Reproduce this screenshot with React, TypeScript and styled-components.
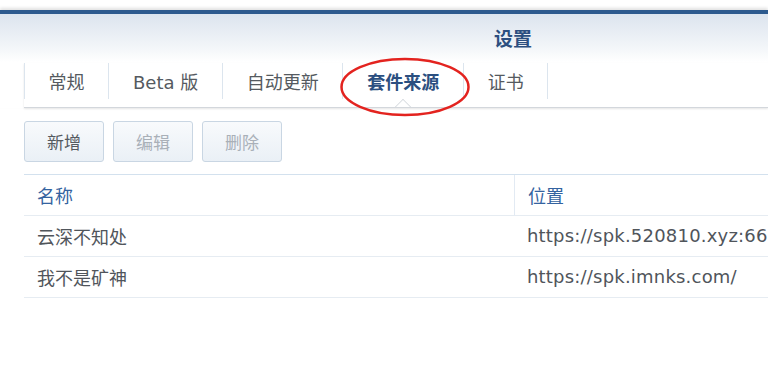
import React from 'react'
import styled, { createGlobalStyle, css } from 'styled-components'

const GlobalStyle = createGlobalStyle`
  html, body {
    margin: 0;
    padding: 0;
    background: #fff;
    overflow: hidden;
  }
  body {
    font-family: "DejaVu Sans", "Noto Sans CJK SC", sans-serif;
  }
`

const Page = styled.div`
  position: relative;
  width: 768px;
  height: 384px;
  overflow: hidden;
  padding-top: 10px;
  box-sizing: border-box;
  background: #fff;
`

const Header = styled.div`
  border-top: 4px solid #2d5a8e;
  box-shadow: 0 -2px 3px rgba(0, 0, 0, 0.12);
  background: linear-gradient(to bottom, #dce4ee 0px, #f3f6f9 34px, #ffffff 48px);
`

const Title = styled.div`
  height: 49px;
  line-height: 47px;
  padding-left: 494px;
  font-family: "Noto Sans CJK SC", sans-serif;
  font-size: 19px;
  font-weight: 700;
  color: #2c4f80;
`

const TabStrip = styled.div`
  display: flex;
  margin-left: 24px;
  padding-bottom: 8px;
  border-bottom: 1px solid #d3d7dc;
  box-shadow: 0 1px 2px rgba(0, 0, 0, 0.1);
`

const Tab = styled.div<{ active?: boolean; first?: boolean }>`
  position: relative;
  height: 33px;
  line-height: 33px;
  padding: 3px 23.75px 0 ${({ first }) => (first ? '23.5px' : '23.75px')};
  border-right: 1px solid #dce5ee;
  border-left: ${({ first }) => (first ? '1px solid #dce5ee' : 'none')};
  font-size: 18px;
  color: #555a60;
  white-space: nowrap;
  ${({ active }) =>
    active &&
    css`
      font-weight: 700;
      color: #2b4f80;
      &::after {
        content: '';
        position: absolute;
        left: 50%;
        bottom: -14px;
        width: 11px;
        height: 11px;
        margin-left: -6px;
        background: #fff;
        border-left: 1px solid #d3d7dc;
        border-top: 1px solid #d3d7dc;
        transform: rotate(45deg);
        clip-path: polygon(0 0, 100% 0, 0 100%);
      }
    `}
`

const Toolbar = styled.div`
  display: flex;
  gap: 9px;
  margin: 13px 0 0 24px;
`

const Button = styled.button<{ disabled?: boolean }>`
  width: 80px;
  height: 41px;
  padding: 0;
  border: 1px solid #c9d6e3;
  border-radius: 3px;
  background: linear-gradient(to bottom, #f8fafc, #eaf0f6);
  font-family: "Noto Sans CJK SC", sans-serif;
  font-size: 17px;
  color: ${({ disabled }) => (disabled ? '#a9b0b8' : '#555a60')};
`

const Grid = styled.div`
  display: grid;
  grid-template-columns: 490px 1fr;
  margin: 12px 0 0 24px;
  border-top: 1px solid #d3e1ee;
`

const HeadCell = styled.div<{ divider?: boolean }>`
  height: 40px;
  line-height: 40px;
  padding-left: 13px;
  border-bottom: 1px solid #e6ecf2;
  border-left: ${({ divider }) => (divider ? '1px solid #e2eaf3' : 'none')};
  font-family: "Noto Sans CJK SC", sans-serif;
  font-size: 18px;
  color: #3463a0;
`

const Cell = styled.div`
  height: 40px;
  line-height: 40px;
  padding-left: 13px;
  border-bottom: 1px solid #e6ecf2;
  font-size: 18px;
  letter-spacing: 0.2px;
  color: #50555b;
  white-space: nowrap;
  overflow: hidden;
`

const NameCell = styled(Cell)`
  letter-spacing: 0;
  font-family: "Noto Sans CJK SC", sans-serif;
`

const UrlCell = styled(Cell)`
  padding-left: 13px;
`

const Highlight = styled.svg`
  position: absolute;
  left: 338px;
  top: 56px;
  pointer-events: none;
`

const tabs = ['常规', 'Beta 版', '自动更新', '套件来源', '证书']

const sources = [
  { name: '云深不知处', url: 'https://spk.520810.xyz:666/' },
  { name: '我不是矿神', url: 'https://spk.imnks.com/' }
]

export default function App() {
  return (
    <>
      <GlobalStyle />
      <Page>
        <Header>
          <Title>设置</Title>
          <TabStrip>
            {tabs.map((t, i) => (
              <Tab key={t} first={i === 0} active={t === '套件来源'}>
                {t}
              </Tab>
            ))}
          </TabStrip>
        </Header>
        <Toolbar>
          <Button>新增</Button>
          <Button disabled>编辑</Button>
          <Button disabled>删除</Button>
        </Toolbar>
        <Grid>
          <HeadCell>名称</HeadCell>
          <HeadCell divider>位置</HeadCell>
          {sources.map((s) => (
            <React.Fragment key={s.name}>
              <NameCell>{s.name}</NameCell>
              <UrlCell>{s.url}</UrlCell>
            </React.Fragment>
          ))}
        </Grid>
        <Highlight width="134" height="62" viewBox="0 0 134 62">
          <ellipse cx="67" cy="31" rx="63.5" ry="28" fill="none" stroke="#e3231f" strokeWidth="2.5" />
        </Highlight>
      </Page>
    </>
  )
}
